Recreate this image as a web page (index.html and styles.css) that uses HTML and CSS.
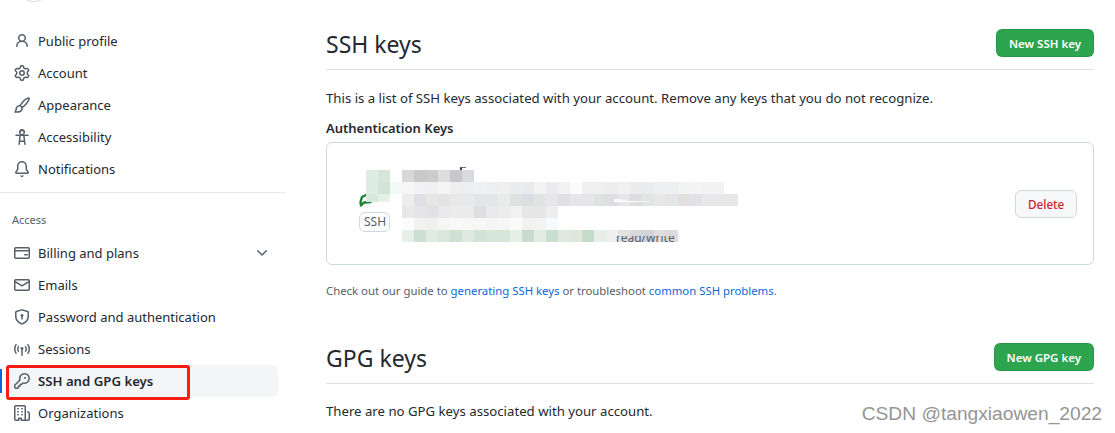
FILE: index.html
```html
<!DOCTYPE html>
<html lang="en">
<head>
<meta charset="utf-8">
<title>SSH and GPG keys</title>
<link rel="stylesheet" href="styles.css">
</head>
<body>
<div class="page">
  <aside class="sidebar">
    <div class="avatar-slice"></div>
    <nav class="nav-group">
      <a class="nav-item"><svg class="icon" viewBox="0 0 16 16"><path d="M10.561 8.073a6.005 6.005 0 0 1 3.432 5.142.75.75 0 1 1-1.498.07 4.5 4.5 0 0 0-8.99 0 .75.75 0 0 1-1.498-.07 6.004 6.004 0 0 1 3.431-5.142 3.999 3.999 0 1 1 5.123 0ZM10.5 5a2.5 2.5 0 1 0-5 0 2.5 2.5 0 0 0 5 0Z"/></svg>Public profile</a>
      <a class="nav-item"><svg class="icon" viewBox="0 0 16 16"><path d="M8 0a8.2 8.2 0 0 1 .701.031C9.444.095 9.99.645 10.16 1.29l.288 1.107c.018.066.079.158.212.224.231.114.454.243.668.386.123.082.233.09.299.071l1.103-.303c.644-.176 1.392.021 1.82.63.27.385.506.792.704 1.218.315.675.111 1.422-.364 1.891l-.814.806c-.049.048-.098.147-.088.294.016.257.016.515 0 .772-.01.147.038.246.088.294l.814.806c.475.469.679 1.216.364 1.891a7.977 7.977 0 0 1-.704 1.217c-.428.61-1.176.807-1.82.63l-1.102-.302c-.067-.019-.177-.011-.3.071a5.909 5.909 0 0 1-.668.386c-.133.066-.194.158-.211.224l-.29 1.106c-.168.646-.715 1.196-1.458 1.26a8.006 8.006 0 0 1-1.402 0c-.743-.064-1.289-.614-1.458-1.26l-.289-1.106c-.018-.066-.079-.158-.212-.224a5.738 5.738 0 0 1-.668-.386c-.123-.082-.233-.09-.299-.071l-1.103.303c-.644.176-1.392-.021-1.82-.63a8.12 8.12 0 0 1-.704-1.218c-.315-.675-.111-1.422.363-1.891l.815-.806c.05-.048.098-.147.088-.294a6.214 6.214 0 0 1 0-.772c.01-.147-.038-.246-.088-.294l-.815-.806C.635 6.045.431 5.298.746 4.623a7.92 7.92 0 0 1 .704-1.217c.428-.61 1.176-.807 1.82-.63l1.102.302c.067.019.177.011.3-.071.214-.143.437-.272.668-.386.133-.066.194-.158.211-.224l.29-1.106C6.009.645 6.556.095 7.299.03 7.53.01 7.764 0 8 0Zm-.571 1.525c-.036.003-.108.036-.137.146l-.289 1.105c-.147.561-.549.967-.998 1.189-.173.086-.34.183-.5.29-.417.278-.97.423-1.529.27l-1.103-.303c-.109-.03-.175.016-.195.045-.22.312-.412.644-.573.99-.014.031-.021.11.059.19l.815.806c.411.406.562.957.53 1.456a4.709 4.709 0 0 0 0 .582c.032.499-.119 1.05-.53 1.456l-.815.806c-.081.08-.073.159-.059.19.162.346.353.677.573.989.02.03.085.076.195.046l1.102-.303c.56-.153 1.113-.008 1.53.27.161.107.328.204.501.29.447.222.85.629.997 1.189l.289 1.105c.029.109.101.143.137.146a6.6 6.6 0 0 0 1.142 0c.036-.003.108-.036.137-.146l.289-1.105c.147-.561.549-.967.998-1.189.173-.086.34-.183.5-.29.417-.278.97-.423 1.529-.27l1.103.303c.109.029.175-.016.195-.045.22-.313.411-.644.573-.99.014-.031.021-.11-.059-.19l-.815-.806c-.411-.406-.562-.957-.53-1.456a4.709 4.709 0 0 0 0-.582c-.032-.499.119-1.05.53-1.456l.815-.806c.081-.08.073-.159.059-.19a6.464 6.464 0 0 0-.573-.989c-.02-.03-.085-.076-.195-.046l-1.102.303c-.56.153-1.113.008-1.53-.27a4.44 4.44 0 0 0-.501-.29c-.447-.222-.85-.629-.997-1.189l-.289-1.105c-.029-.11-.101-.143-.137-.146a6.6 6.6 0 0 0-1.142 0ZM11 8a3 3 0 1 1-6 0 3 3 0 0 1 6 0ZM9.5 8a1.5 1.5 0 1 0-3.001.001A1.5 1.5 0 0 0 9.5 8Z"/></svg>Account</a>
      <a class="nav-item"><svg class="icon icon-line" viewBox="0 0 16 16"><path d="M1 15C2.2 14 1.9 12.5 2.4 11 3 9.2 4.800 8.300 6.300 8.900 7.900 9.500 8.500 11.200 7.700 12.800 6.800 14.600 4.300 15.300 1 15Z"/><path d="M6 8.700C8 5.600 12 1.500 14.300.9 15 .8 15.300 1.200 15.100 1.900 14.300 4.300 10.700 8.500 8.100 10.600"/></svg>Appearance</a>
      <a class="nav-item"><svg class="icon" viewBox="0 0 16 16"><path d="M9.923 5.302c.063.063.122.129.178.198H14A.75.75 0 0 1 14 7h-3.3l.578 5.163.362 2.997a.75.75 0 0 1-1.49.18L9.868 13H6.132l-.282 2.34a.75.75 0 0 1-1.49-.18l.362-2.997L5.300 7H2a.75.75 0 0 1 0-1.500h3.900a2.540 2.540 0 0 1 .176-.198 3 3 0 1 1 3.847 0ZM9.200 7.073h-2.400l-.496 4.427h3.392L9.200 7.073ZM8 5a1.500 1.500 0 1 0 0-3 1.500 1.500 0 0 0 0 3Z"/></svg>Accessibility</a>
      <a class="nav-item"><svg class="icon" viewBox="0 0 16 16"><path d="M8 16c.9 0 1.7-.6 1.93-1.5H6.070c.23.9 1.030 1.500 1.930 1.500ZM3 5a5 5 0 0 1 10 0v2.947c0 .05.015.098.042.139l1.703 2.555A1.519 1.519 0 0 1 13.482 13H2.518a1.516 1.516 0 0 1-1.263-2.360l1.703-2.554A.255.255 0 0 0 3 7.947Zm5-3.500A3.500 3.500 0 0 0 4.500 5v2.947c0 .346-.102.683-.294.97l-1.703 2.556a.017.017 0 0 0-.003.01l.001.006c0 .002.002.004.004.006l.006.004.007.001h10.964l.007-.001.006-.004.004-.006.001-.007a.017.017 0 0 0-.003-.01l-1.703-2.554a1.745 1.745 0 0 1-.294-.97V5A3.500 3.500 0 0 0 8 1.500Z"/></svg>Notifications</a>
    </nav>
    <div class="nav-section">
      <h2 class="nav-heading">Access</h2>
      <a class="nav-item"><svg class="icon" viewBox="0 0 16 16"><path d="M0 3.750C0 2.784.784 2 1.750 2h12.500c.966 0 1.750.784 1.750 1.750v8.500A1.750 1.750 0 0 1 14.250 14H1.750A1.750 1.750 0 0 1 0 12.250ZM14.500 6.500h-13v5.750c0 .138.112.25.25.25h12.500a.25.25 0 0 0 .25-.25Zm0-2.750a.25.25 0 0 0-.25-.25H1.750a.25.25 0 0 0-.25.25V5h13ZM10.750 9h2.500a.75.75 0 0 1 0 1.500h-2.500a.75.75 0 0 1 0-1.500Z"/></svg>Billing and plans<svg class="chev" viewBox="0 0 16 16"><path d="M12.780 5.220a.749.749 0 0 1 0 1.060l-4.250 4.250a.749.749 0 0 1-1.060 0L3.220 6.280a.749.749 0 1 1 1.060-1.060L8 8.939l3.720-3.719a.749.749 0 0 1 1.060 0Z"/></svg></a>
      <a class="nav-item"><svg class="icon" viewBox="0 0 16 16"><path d="M1.750 2h12.500c.966 0 1.750.784 1.750 1.750v8.500A1.750 1.750 0 0 1 14.250 14H1.750A1.750 1.750 0 0 1 0 12.250v-8.500C0 2.784.784 2 1.750 2ZM1.500 12.251c0 .138.112.25.25.25h12.500a.25.25 0 0 0 .25-.25V5.809L8.380 9.397a.75.75 0 0 1-.76 0L1.500 5.809v6.442Zm13-8.181v-.32a.25.25 0 0 0-.25-.25H1.750a.25.25 0 0 0-.25.25v.32L8 7.880Z"/></svg>Emails</a>
      <a class="nav-item"><svg class="icon" viewBox="0 0 16 16"><path d="M8.533.133a1.750 1.750 0 0 0-1.066 0l-5.250 1.680A1.750 1.750 0 0 0 1 3.480V7c0 1.566.32 3.182 1.303 4.682.983 1.498 2.585 2.813 5.032 3.855a1.697 1.697 0 0 0 1.330 0c2.447-1.042 4.049-2.357 5.032-3.855C14.680 10.182 15 8.566 15 7V3.480a1.750 1.750 0 0 0-1.217-1.667Zm-.61 1.429a.25.25 0 0 1 .153 0l5.250 1.680a.25.25 0 0 1 .174.238V7c0 1.358-.275 2.666-1.057 3.860-.784 1.194-2.121 2.340-4.366 3.297a.196.196 0 0 1-.154 0c-2.245-.956-3.582-2.104-4.366-3.298C2.775 9.666 2.500 8.360 2.500 7V3.480a.25.25 0 0 1 .174-.238ZM9.500 6.500c0 .56-.3 1.050-.75 1.300V10a.75.75 0 0 1-1.500 0V7.800A1.500 1.500 0 1 1 9.500 6.500Z"/></svg>Password and authentication</a>
      <a class="nav-item"><svg class="icon" viewBox="0 0 16 16"><path d="M1.500 8c0 1.400.4 2.700 1.100 3.800a.75.75 0 1 1-1.250.82A8.400 8.400 0 0 1 0 8c0-1.700.5-3.300 1.350-4.620a.75.75 0 1 1 1.250.82A7 7 0 0 0 1.500 8Zm13 0c0-1.400-.4-2.700-1.100-3.800a.75.75 0 1 1 1.250-.82A8.400 8.400 0 0 1 16 8c0 1.700-.5 3.300-1.350 4.620a.75.75 0 1 1-1.250-.82c.7-1.100 1.100-2.400 1.100-3.800ZM4.500 8c0 .7.2 1.300.5 1.800a.75.75 0 1 1-1.250.82A5 5 0 0 1 3 8c0-1 .3-1.900.75-2.620A.75.75 0 1 1 5 6.200c-.3.5-.5 1.100-.5 1.800Zm7 0c0-.7-.2-1.300-.5-1.800a.75.75 0 1 1 1.250-.82A5 5 0 0 1 13 8c0 1-.3 1.900-.75 2.620A.75.75 0 1 1 11 9.800c.3-.5.5-1.100.5-1.800ZM9.500 7.500c0 .56-.3 1.050-.75 1.300v5.450a.75.75 0 0 1-1.500 0V8.800A1.500 1.500 0 1 1 9.500 7.500Z"/></svg>Sessions</a>
      <a class="nav-item is-current"><svg class="icon" viewBox="0 0 16 16"><path d="M10.500 0a5.499 5.499 0 1 1-1.288 10.848l-.932.932a.749.749 0 0 1-.53.22H7v.75a.749.749 0 0 1-.22.53l-.5.5a.749.749 0 0 1-.53.22H5v.75a.749.749 0 0 1-.22.53l-.5.5a.749.749 0 0 1-.53.22h-2A1.750 1.750 0 0 1 0 14.250v-2c0-.199.079-.389.22-.53l4.932-4.932A5.500 5.500 0 0 1 10.500 0Zm-4 5.500c-.001.431.069.86.205 1.269a.75.75 0 0 1-.181.768L1.500 12.560v1.690c0 .138.112.25.25.25h1.690l.06-.06v-1.190a.75.75 0 0 1 .75-.75h1.190l.06-.06v-1.190a.75.75 0 0 1 .75-.75h1.190l1.023-1.025a.75.75 0 0 1 .768-.18A4 4 0 1 0 6.500 5.500ZM11 6a1 1 0 1 1 0-2 1 1 0 0 1 0 2Z"/></svg>SSH and GPG keys<span class="current-bar"></span><span class="red-box"></span></a>
      <a class="nav-item"><svg class="icon" viewBox="0 0 16 16"><path d="M1.750 16A1.750 1.750 0 0 1 0 14.250V1.750C0 .784.784 0 1.750 0h8.500C11.216 0 12 .784 12 1.750v12.500c0 .085-.006.168-.018.25h2.268a.25.25 0 0 0 .25-.25V8.285a.25.25 0 0 0-.111-.208l-1.055-.703a.749.749 0 1 1 .832-1.248l1.055.703c.487.325.779.871.779 1.456v5.965A1.750 1.750 0 0 1 14.250 16h-3.500a.766.766 0 0 1-.197-.026c-.099.017-.2.026-.303.026h-3a.75.75 0 0 1-.75-.75V14h-1v1.250a.75.75 0 0 1-.75.75Zm-.25-1.750c0 .138.112.25.25.25H4v-1.250a.75.75 0 0 1 .75-.75h2.500a.75.75 0 0 1 .75.75v1.250h2.250a.25.25 0 0 0 .25-.25V1.750a.25.25 0 0 0-.25-.25h-8.500a.25.25 0 0 0-.25.25ZM3.750 6h.5a.75.75 0 0 1 0 1.500h-.5a.75.75 0 0 1 0-1.500ZM3 3.750A.75.75 0 0 1 3.750 3h.5a.75.75 0 0 1 0 1.500h-.5A.75.75 0 0 1 3 3.750Zm4 3A.75.75 0 0 1 7.750 6h.5a.75.75 0 0 1 0 1.500h-.5A.75.75 0 0 1 7 6.750ZM7.750 3h.5a.75.75 0 0 1 0 1.500h-.5a.75.75 0 0 1 0-1.500ZM3 9.750A.75.75 0 0 1 3.750 9h.5a.75.75 0 0 1 0 1.500h-.5A.75.75 0 0 1 3 9.750ZM7.750 9h.5a.75.75 0 0 1 0 1.500h-.5a.75.75 0 0 1 0-1.500Z"/></svg>Organizations</a>
    </div>
  </aside>
  <main class="content">
    <header class="section-head">
      <h1 class="section-title">SSH keys</h1>
      <a class="btn-new">New SSH key</a>
    </header>
    <p class="lead">This is a list of SSH keys associated with your account. Remove any keys that you do not recognize.</p>
    <h3 class="sub-title">Authentication Keys</h3>
    <div class="key-card">
      <div class="key-left">
        <div class="key-icon">
          <svg class="key-glyph" viewBox="0 0 14 15"><path d="M7 2 L3 4 L1.500 9 L2 12.500 L5 9.500 L11.500 9"/></svg>
          <div class="green-mosaic"></div>
          <span class="ssh-tag">SSH</span>
        </div>
        <div class="blur-wrap">
          <div class="blur-row row-a"></div>
          <div class="blur-row row-b"></div>
          <div class="blur-row row-c"></div>
          <div class="blur-row row-d"></div>
          <div class="blur-row row-e"></div>
          <div class="blur-row row-f"></div>
          <span class="residue-mark"></span>
          <span class="residue-gap"></span>
          <span class="residue-text">read/write</span>
        </div>
      </div>
      <a class="btn-delete">Delete</a>
    </div>
    <p class="note">Check out our guide to <a class="link">generating SSH keys</a> or troubleshoot <a class="link">common SSH problems</a>.</p>
    <header class="section-head gpg-head">
      <h1 class="section-title">GPG keys</h1>
      <a class="btn-new">New GPG key</a>
    </header>
    <p class="lead gpg-lead">There are no GPG keys associated with your account.</p>
  </main>
</div>
<div class="watermark">CSDN @tangxiaowen_2022</div>
</body>
</html>
```
FILE: styles.css
```css
* { box-sizing: border-box; }
html, body { margin: 0; height: 100%; }
body {
  width: 1115px;
  height: 433px;
  overflow: hidden;
  position: relative;
  background: #fff;
  color: #24292f;
  font-family: "Noto Sans", "Liberation Sans", sans-serif;
  font-size: 13px;
}
.page { display: flex; align-items: flex-start; }
.sidebar { width: 286px; flex: none; padding-left: 6px; position: relative; }
.avatar-slice {
  position: absolute;
  left: 18px; top: -28px;
  width: 32px; height: 30px;
  border-radius: 50%;
  border: 1px solid #d8dadd;
}
.nav-group { padding-top: 25px; padding-bottom: 7px; margin-left: -6px; padding-left: 6px; border-bottom: 1px solid #e6e8ec; }
.nav-item {
  display: flex;
  align-items: center;
  height: 32px;
  width: 272px;
  padding-left: 8px;
  gap: 8px;
  position: relative;
  color: #24292f;
  white-space: nowrap;
}
.icon { width: 16px; height: 16px; fill: #57606a; flex: none; }
.icon-line { fill: none; stroke: #57606a; stroke-width: 1.5; stroke-linejoin: round; stroke-linecap: round; }
.chev { width: 16px; height: 16px; fill: #57606a; position: absolute; right: 8px; top: 8px; }
.nav-section { padding-top: 11px; }
.nav-heading { margin: 0 0 1px; padding-left: 6px; font-size: 11px; font-weight: 400; line-height: 32px; height: 32px; color: #57606a; }
.is-current { background: #f4f5f7; border-radius: 6px; font-weight: 600; font-size: 13.2px; }
.current-bar {
  position: absolute; left: -6px; top: 4px;
  width: 2px; height: 24px;
  background: #0969da;
}
.red-box {
  position: absolute;
  left: 0; top: 0;
  width: 184px; height: 35px;
  border: 3px solid #fb1d13;
  border-radius: 3px;
}
.content { width: 768px; margin-left: 40px; flex: none; }
.section-head {
  display: flex;
  justify-content: space-between;
  align-items: center;
  height: 41px;
  margin-top: 29px;
  padding-bottom: 13px;
  border-bottom: 1px solid #dfe1e5;
}
.section-title { margin: 2px 0 0; font-size: 23px; font-weight: 400; line-height: 30px; color: #24292f; }
.btn-new {
  background: #2da44e;
  color: #fff;
  font-size: 11.5px;
  font-weight: 600;
  height: 28px;
  line-height: 28px;
  padding: 0 12px;
  border-radius: 6px;
  border: 1px solid rgba(27,31,36,.1);
  display: block;
}
.lead { margin: 19px 0 0; line-height: 18px; font-size: 13.2px; }
.sub-title { margin: 12px 0 0; font-size: 13px; font-weight: 600; line-height: 18px; }
.key-card {
  margin-top: 5px;
  height: 123px;
  border: 1px solid #d0d7de;
  border-radius: 6px;
  display: flex;
  align-items: center;
  justify-content: space-between;
  padding: 0 16px 0 32px;
}
.key-left { display: flex; gap: 11px; position: relative; padding-top: 5px; }
.key-icon { width: 32px; display: flex; flex-direction: column; align-items: flex-start; position: relative; }
.green-mosaic {
  position: relative;
  width: 36px;
  height: 32px;
  margin-left: 7px;
  background:
    linear-gradient(90deg, #dfece3 0 12px, #d5e5da 12px 24px, transparent 24px) 0 0 / 36px 12px no-repeat,
    linear-gradient(90deg, #dfece3 0 12px, #d3e3d7 12px 24px, #f2f8f3 24px 36px) 0 12px / 36px 12px no-repeat,
    linear-gradient(90deg, #d8e8dc 0 12px, #e5f0e8 12px 24px, transparent 24px) 0 24px / 36px 8px no-repeat;
}
.key-glyph {
  position: absolute;
  left: 0; top: 23px;
  width: 14px; height: 15px;
  fill: none;
  stroke: #1a7f37;
  stroke-width: 2.4;
  stroke-linejoin: round;
  stroke-linecap: round;
}
.ssh-tag {
  border: 1px solid #d0d7de;
  border-radius: 6px;
  font-size: 12px;
  padding: 0 4px;
  line-height: 18px;
  height: 20px;
  width: 31px;
  margin-top: 10px;
  color: #57606a;
}
.btn-delete {
  color: #cf222e;
  background: #f6f8fa;
  border: 1px solid #d0d7de;
  border-radius: 6px;
  font-size: 11.7px;
  font-weight: 500;
  height: 28px;
  line-height: 27px;
  padding: 0 12px;
  width: 62px;
  text-align: center;
}
.blur-wrap { position: relative; }
.blur-row { height: 12px; }
.row-a { width: 72px; background: linear-gradient(90deg, #d8d8da 0 12px, #c9c9cb 12px 24px, #cdcbcc 24px 36px, #dcdddf 36px 48px, #c8c8ca 48px 60px, #d8dade 60px 72px); }
.row-b { width: 322px; background: linear-gradient(90deg, #f6f6f5 0 12px, #f0f1f4 12px 24px, #f0f0f0 24px 36px, #f5f5f5 36px 48px, #efefef 48px 60px, #edeef0 60px 72px, #eff0f3 72px 84px, #edeef0 84px 96px, #efeff0 96px 108px, #ebecee 108px 120px, #e9eaeb 120px 132px, #f2f3f2 132px 144px, #ebebee 144px 156px, #f1f1f1 156px 168px, #fbfbfa 168px 180px, #f0f0f1 180px 204px, #ecedee 204px 216px, #f1f1f1 216px 228px, #ebecee 228px 252px, #eeeff0 252px 276px, #f2f3f3 276px 288px, #f3f4f3 288px 300px, #f1f1f2 300px 322px); }
.row-c { width: 336px; background: linear-gradient(90deg, #eeedec 0 12px, #dfe0e3 12px 24px, #e6e6e4 24px 36px, #e3e4e6 36px 48px, #e9e9e7 48px 60px, #e8e9ed 60px 72px, #e4e5e8 72px 96px, #e9ebe9 96px 108px, #e0e2e1 108px 120px, #dbdfe2 120px 132px, #e2e3e3 132px 144px, #e7e7ea 144px 156px, #e0e0e2 156px 168px, #e6e6ea 168px 180px, #e6e6e8 180px 192px, #e0e2e2 192px 204px, #dddde2 204px 216px, #e6e6e8 216px 228px, #dcdde0 228px 240px, #e3e4e4 240px 252px, #e7e7e7 252px 264px, #e5e5e7 264px 276px, #e4dfdf 276px 288px, #e1e2e6 288px 300px, #e8e8ea 300px 336px); }
.row-d { width: 156px; background: linear-gradient(90deg, #e8e8e8 0 12px, #e5e5e7 12px 24px, #e2e2e4 24px 36px, #e9e9eb 36px 48px, #ecebeb 48px 60px, #ebebeb 60px 72px, #dfdfe2 72px 84px, #e9e9ec 84px 96px, #ececed 96px 108px, #f1f1f3 108px 120px, #e6e6e7 120px 132px, #e5e6e8 132px 144px, #eeeeef 144px 156px); }
.row-e { width: 156px; background: linear-gradient(90deg, #fcfcfc 0 12px, #f2f2f3 12px 24px, #f0f0f1 24px 36px, #f6f6f6 36px 48px, #f8f8f8 48px 60px, #f7f7f7 60px 84px, #f5f5f6 84px 96px, #f6f6f7 96px 108px, #fafafa 108px 120px, #f2f2f3 120px 132px, #f3f3f4 132px 144px, #f8f9fb 144px 156px); }
.row-f { width: 276px; background: linear-gradient(90deg, #e7efe8 0 12px, #cbdfd2 12px 24px, #e0ece3 24px 36px, #d8e6db 36px 48px, #cfe1d3 48px 60px, #dfe9e2 60px 72px, #d2e2d7 72px 84px, #d6e6da 84px 108px, #e5efe7 108px 120px, #cadbce 120px 132px, #e2ece4 132px 144px, #c9dfd0 144px 156px, #dde9e0 156px 168px, #dfe6dc 168px 180px, #c5dccb 180px 192px, #e6eee7 192px 204px, #efefef 204px 216px, #e3e0e1 216px 228px, #d8d8dc 228px 240px, #d3d2d8 240px 252px, #dedcde 252px 264px, #dcdcde 264px 276px); }
.residue-mark {
  position: absolute;
  left: 58px; top: -3px;
  width: 6px; height: 3px;
  border-left: 2px solid #2c3a66;
  border-top: 1px solid #6b7390;
}
.residue-gap {
  position: absolute;
  left: 212px; top: 29px;
  width: 36px; height: 3px;
  background: #fff;
  clip-path: polygon(0 50%, 100% 80%, 100% 100%, 0 100%, 0 0, 40% 30%);
}
.residue-text {
  position: absolute;
  left: 214px; top: 60px;
  font-size: 12px;
  line-height: 16px;
  color: #57606a;
  clip-path: inset(6px 0 0 0);
}
.note { margin: 17px 0 0; font-size: 11.35px; line-height: 18px; color: #57606a; }
.link { color: #0969da; }
.gpg-head { margin-top: 43px; }
.gpg-lead { margin-top: 18px; }
.watermark {
  position: absolute;
  right: 13px;
  top: 403px;
  font-family: "Liberation Sans", sans-serif;
  font-size: 19.2px;
  color: #8a8a8a;
  opacity: .9;
}
```
